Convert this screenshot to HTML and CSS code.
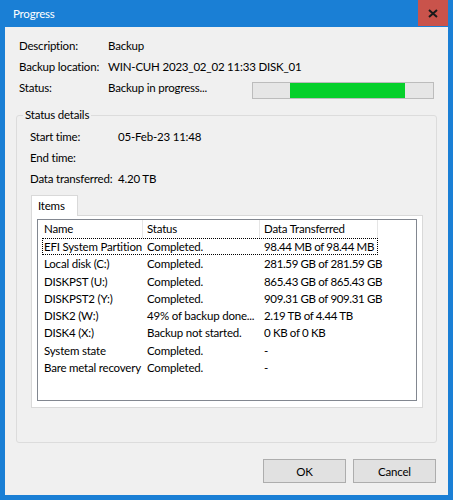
FILE: index.html
```html
<!DOCTYPE html>
<html>
<head>
<meta charset="utf-8">
<link rel="stylesheet" href="styles.css">
</head>
<body>
<div class="window">
  <div class="titlebar">
    <span class="title">Progress</span>
    <div class="close">
      <svg width="10" height="9" viewBox="0 0 10 9"><path d="M1 1 L9 8 M9 1 L1 8" stroke="#1a1a1a" stroke-width="2" fill="none"/></svg>
    </div>
  </div>
  <div class="client">
    <div class="info">
      <div class="row"><span class="label">Description:</span><span>Backup</span></div>
      <div class="row"><span class="label">Backup location:</span><span>WIN-CUH 2023_02_02 11:33 DISK_01</span></div>
      <div class="row"><span class="label">Status:</span><span>Backup in progress...</span>
        <div class="progress"><div class="marquee"></div></div>
      </div>
    </div>
    <fieldset class="group">
      <legend>Status details</legend>
      <div class="group-body">
        <div class="details">
          <div class="row"><span class="dlabel">Start time:</span><span>05-Feb-23 11:48</span></div>
          <div class="row"><span class="dlabel">End time:</span><span></span></div>
          <div class="row"><span class="dlabel">Data transferred:</span><span>4.20 TB</span></div>
        </div>
        <div class="tabs"><div class="tab">Items</div></div>
        <div class="tabpanel">
          <div class="listview">
            <div class="lvheader">
              <div class="hcell h1">Name</div>
              <div class="hcell h2">Status</div>
              <div class="hcell h3">Data Transferred</div>
            </div>
            <div class="lvrow focus"><span>EFI System Partition</span><span>Completed.</span><span class="data">98.44 MB of 98.44 MB</span></div>
            <div class="lvrow"><span>Local disk (C:)</span><span>Completed.</span><span class="data">281.59 GB of 281.59 GB</span></div>
            <div class="lvrow"><span>DISKPST (U:)</span><span>Completed.</span><span class="data">865.43 GB of 865.43 GB</span></div>
            <div class="lvrow"><span>DISKPST2 (Y:)</span><span>Completed.</span><span class="data">909.31 GB of 909.31 GB</span></div>
            <div class="lvrow"><span>DISK2 (W:)</span><span>49% of backup done...</span><span class="data">2.19 TB of 4.44 TB</span></div>
            <div class="lvrow"><span>DISK4 (X:)</span><span>Backup not started.</span><span class="data">0 KB of 0 KB</span></div>
            <div class="lvrow"><span>System state</span><span>Completed.</span><span class="data">-</span></div>
            <div class="lvrow"><span>Bare metal recovery</span><span>Completed.</span><span class="data">-</span></div>
          </div>
        </div>
      </div>
    </fieldset>
    <div class="buttons">
      <button class="btn">OK</button>
      <button class="btn">Cancel</button>
    </div>
  </div>
</div>
</body>
</html>
```
FILE: styles.css
```css
* { box-sizing: border-box; }
html, body { margin: 0; padding: 0; }
body {
  font-family: Lato, "Noto Sans", sans-serif;
  font-size: 11.5px;
  letter-spacing: -0.2px;
  color: #000;
  background: #1a7fd5;
}
.window {
  width: 453px;
  height: 500px;
  background: #1a7fd5;
  padding: 0 5px 5px 5px;
  display: flex;
  flex-direction: column;
}
.titlebar {
  height: 27px;
  display: flex;
  align-items: flex-start;
  justify-content: space-between;
}
.title {
  color: #fff;
  padding-left: 8px;
  line-height: 27px;
}
.close {
  width: 30px;
  height: 26px;
  background: #c9534b;
  display: flex;
  align-items: center;
  justify-content: center;
}
.client {
  flex: 1;
  background: #f0f0f0;
  display: flex;
  flex-direction: column;
}
.info {
  padding: 8px 14px 0 14px;
}
.row {
  height: 21px;
  display: flex;
  align-items: center;
  white-space: nowrap;
}
.label { width: 89px; flex: none; }
.progress {
  margin-left: auto;
  margin-top: 5px;
  width: 182px;
  height: 17px;
  background: #e6e6e6;
  border: 1px solid #bcbcbc;
  display: flex;
}
.marquee {
  margin-left: 37px;
  width: 115px;
  background: #06d02b;
}
.group {
  margin: 9px 11px 0 11px;
  padding: 0;
  border: 1px solid #dcdcdc;
  border-radius: 3px;
  min-width: 0;
}
.group legend {
  margin-left: 6px;
  padding: 0 2px;
  line-height: 16px;
}
.group-body {
  padding: 3px 13px 34px 14px;
}
.details { margin-left: -1px; }
.dlabel { width: 88px; flex: none; }
.tabs {
  margin-top: 6px;
  display: flex;
  position: relative;
  z-index: 1;
}
.tab {
  width: 47px;
  height: 21px;
  margin-bottom: -1px;
  background: #fff;
  border: 1px solid #d9d9d9;
  border-bottom: none;
  padding-left: 6px;
  line-height: 19px;
}
.tabpanel {
  background: #fff;
  border: 1px solid #d9d9d9;
  padding: 3px 5px 6px 5px;
}
.listview {
  height: 182px;
  border: 1px solid #828790;
  background: #fff;
}
.lvheader {
  height: 18px;
  display: flex;
}
.hcell {
  height: 18px;
  line-height: 17px;
  border-right: 1px solid #e5e5e5;
  white-space: nowrap;
}
.h1 { width: 105px; padding-left: 6px; }
.h2 { width: 117px; padding-left: 4px; }
.h3 { width: 118px; padding-left: 4px; }
.lvrow {
  margin-left: 4px;
  width: 336px;
  height: 17.3px;
  line-height: 17px;
  display: grid;
  grid-template-columns: 103px 117px 1fr;
  white-space: nowrap;
}
.lvrow span { padding-left: 2px; overflow: hidden; }
.lvrow .data { overflow: visible; letter-spacing: -0.35px; }
.focus { outline: 1px dotted #000; outline-offset: -1px; }
.buttons {
  margin-top: 16px;
  padding-right: 12px;
  display: flex;
  justify-content: flex-end;
  gap: 7px;
}
.btn {
  width: 83px;
  height: 24px;
  background: #e1e1e1;
  border: 1px solid #adadad;
  border-radius: 0;
  font-family: inherit;
  font-size: 11.5px;
  letter-spacing: -0.2px;
  color: #000;
  padding: 0;
}
```
